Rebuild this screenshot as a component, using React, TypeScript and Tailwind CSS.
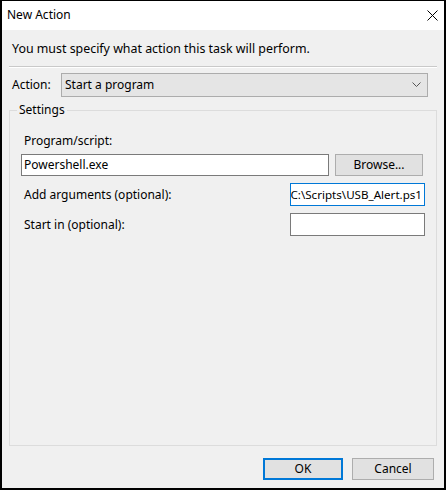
import React from 'react';

const font = { fontFamily: '"Noto Sans", "Segoe UI", Arial, sans-serif' };

export default function App() {
  return (
    <div className="w-[447px] h-[491px] bg-white" style={font}>
      <div className="w-[446px] h-[490px] border-t border-l-2 border-r-2 border-b-2 border-black flex flex-col text-[12px] leading-[16px] text-black">
        {/* title bar */}
        <div className="h-[29px] bg-white flex items-center justify-between pl-[5px] pr-[5px] shrink-0">
          <span className="text-[12px] -mt-[1px]">New Action</span>
          <svg width="11" height="11" viewBox="0 0 11 11" className="mr-[1px] -mt-[1px]">
            <path d="M0.5 0.5 L10.5 10.5 M10.5 0.5 L0.5 10.5" stroke="#000" strokeWidth="1" fill="none" />
          </svg>
        </div>

        {/* body */}
        <div className="flex-1 bg-[#f0f0f0] pl-[7px] pr-[7px] flex flex-col">
          <div className="pt-[11px] pl-[3px] text-[12.4px] leading-[15px]">You must specify what action this task will perform.</div>

          <div className="mt-[10px] border-t border-[#c9c9c9] border-b border-b-white" />

          <div className="mt-[5px] flex items-center">
            <span className="w-[52px] pl-[3px]">Action:</span>
            <div className="w-[367px] h-[24px] bg-[#e5e5e5] border border-[#acacac] flex items-center justify-between pl-[3px] pr-[6px]">
              <span>Start a program</span>
              <svg width="9" height="6" viewBox="0 0 9 6">
                <path d="M0.5 0.5 L4.5 4.5 L8.5 0.5" stroke="#555" strokeWidth="1" fill="none" />
              </svg>
            </div>
          </div>

          <fieldset className="mt-[5px] h-[344px] w-[428px] border border-[#dcdcdc] p-0 m-0">
            <legend className="ml-[7px] px-[2px]">Settings</legend>
            <div className="pt-[15px] pl-[14px]">Program/script:</div>
            <div className="mt-[5px] pl-[11px] flex items-center gap-[6px]">
              <div className="w-[308px] h-[22px] bg-white border border-[#7a7a7a] flex items-center pl-[2px]">Powershell.exe</div>
              <div className="w-[88px] h-[22px] bg-[#e1e1e1] border border-[#adadad] flex items-center justify-center">Browse...</div>
            </div>

            <div className="mt-[7px] flex items-center justify-between pl-[14px] pr-[11px]">
              <span>Add arguments (optional):</span>
              <div className="w-[135px] h-[23px] bg-white border border-[#0078d7] flex items-center justify-end overflow-hidden whitespace-nowrap pr-[2px] text-[11.6px]">
                <span>C:\Scripts\USB_Alert.ps1</span>
                <span className="inline-block w-px h-[15px] bg-black" />
              </div>
            </div>

            <div className="mt-[7px] flex items-center justify-between pl-[14px] pr-[11px]">
              <span>Start in (optional):</span>
              <div className="w-[135px] h-[23px] bg-white border border-[#7a7a7a]" />
            </div>
          </fieldset>

          <div className="mt-[12px] flex justify-end gap-[9px] pr-[3px]">
            <div className="w-[80px] h-[22px] bg-[#e1e1e1] border-2 border-[#0078d7] flex items-center justify-center">OK</div>
            <div className="w-[82px] h-[22px] bg-[#e1e1e1] border border-[#adadad] flex items-center justify-center">Cancel</div>
          </div>
        </div>
      </div>
    </div>
  );
}
